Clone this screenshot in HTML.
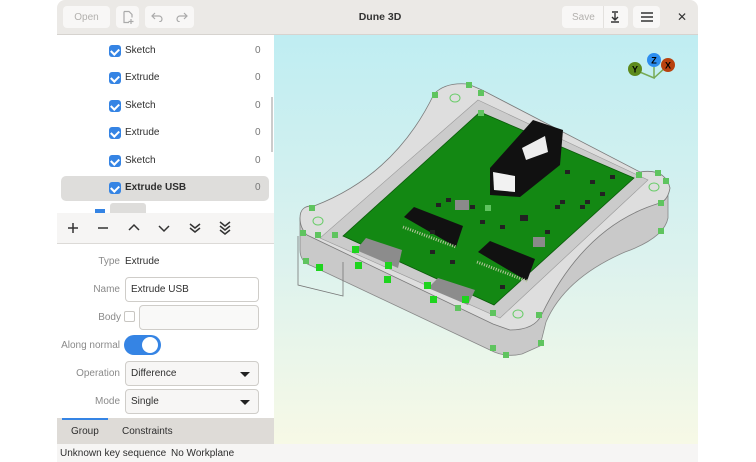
<!DOCTYPE html>
<html><head><meta charset="utf-8"><style>
*{box-sizing:border-box;margin:0;padding:0}
body{width:756px;height:462px;background:#fff;position:relative;overflow:hidden;font-family:"Liberation Sans","DejaVu Sans",sans-serif;font-size:10px;color:#2e2e2e}
.a{position:absolute}
.hdr{left:57px;top:0;width:641px;height:35px;background:#ebe9e6;border-bottom:1px solid #d6d3cf;border-radius:8px 8px 0 0}
.btn{position:absolute;background:#f8f7f6;border-radius:4px;color:#b3b1ae;display:flex;align-items:center;justify-content:center;font-size:10px}
.row{position:absolute;left:61px;width:208px;height:25px}
.cb{position:absolute;left:48px;top:7px;width:12px;height:12px;background:#3584e4;border-radius:3px}
.cb:after{content:"";position:absolute;left:3px;top:1.5px;width:4px;height:6px;border:solid #fff;border-width:0 2px 2px 0;transform:rotate(45deg)}
.lbl{position:absolute;left:64px;top:7px;font-size:10px;color:#2e2e2e}
.num{position:absolute;left:194px;top:7px;color:#777}
.pl{position:absolute;width:120px;text-align:right;color:#8a8a8a;left:0}
.ent{position:absolute;left:125px;width:134px;height:25px;border:1px solid #cfcdc9;border-radius:4px;background:#fff;padding:6px 5px;color:#2e2e2e}
.dd{position:absolute;left:125px;width:134px;height:25px;border:1px solid #cfcdc9;border-radius:4px;background:#f7f6f5;padding:6px 5px;color:#2e2e2e}
.dd:after{content:"";position:absolute;right:8px;top:10px;border:5px solid transparent;border-top:5px solid #222;border-bottom:0}
</style></head><body>
<div class="a hdr"></div>
<div class="btn" style="left:63px;top:6px;width:47px;height:22px">Open</div>
<div class="btn" style="left:116px;top:6px;width:23px;height:22px"><svg width="14" height="14" viewBox="0 0 14 14"><path d="M3 1.5h5l3 3v3M3 1.5v11h5" fill="none" stroke="#aaa" stroke-width="1.2"/><path d="M10 9v5M7.5 11.5h5" stroke="#aaa" stroke-width="1.2"/></svg></div>
<div class="btn" style="left:145px;top:6px;width:49px;height:22px;justify-content:space-around"><svg width="12" height="10"><path d="M4 1L1 4l3 3M1 4h7a3 3 0 0 1 0 6" fill="none" stroke="#aaa" stroke-width="1.2"/></svg><svg width="12" height="10"><path d="M8 1l3 3-3 3M11 4H4a3 3 0 0 0 0 6" fill="none" stroke="#aaa" stroke-width="1.2"/></svg></div>
<div class="a" style="left:340px;top:11px;width:80px;text-align:center;font-weight:bold;font-size:10.5px;color:#333">Dune 3D</div>
<div class="btn" style="left:562px;top:6px;width:66px;height:22px;justify-content:flex-start;padding-left:10px">Save<span style="position:absolute;left:41px;top:0;width:1px;height:22px;background:#e3e1de"></span><svg style="position:absolute;left:48px;top:5px" width="10" height="12"><path d="M2 1h6M5 2v7M2 6l3 3 3-3M1 11h8" fill="none" stroke="#333" stroke-width="1.4"/></svg></div>
<div class="btn" style="left:633px;top:6px;width:27px;height:22px"><svg width="12" height="10"><path d="M0 1h12M0 5h12M0 9h12" stroke="#333" stroke-width="1.6"/></svg></div>
<div class="a" style="left:677px;top:10px;font-size:12px;font-weight:bold;color:#333">✕</div>

<div class="a" style="left:57px;top:35px;width:217px;height:409px;background:#fff"></div>
<div class="a" style="left:61px;top:176px;width:208px;height:25px;background:#dedddb;border-radius:5px"></div>
<div class="row" style="top:38px"><div class="cb"></div><div class="lbl">Sketch</div><div class="num">0</div></div>
<div class="row" style="top:65px"><div class="cb"></div><div class="lbl">Extrude</div><div class="num">0</div></div>
<div class="row" style="top:93px"><div class="cb"></div><div class="lbl">Sketch</div><div class="num">0</div></div>
<div class="row" style="top:120px"><div class="cb"></div><div class="lbl">Extrude</div><div class="num">0</div></div>
<div class="row" style="top:148px"><div class="cb"></div><div class="lbl">Sketch</div><div class="num">0</div></div>
<div class="row" style="top:175px"><div class="cb"></div><div class="lbl" style="font-weight:bold">Extrude USB</div><div class="num">0</div></div>
<div class="a" style="left:271px;top:97px;width:2px;height:55px;background:#ccc"></div>
<div class="a" style="left:95px;top:209px;width:10px;height:4px;background:#3584e4"></div>
<div class="a" style="left:110px;top:203px;width:36px;height:10px;background:#dedddb;border-radius:3px 3px 0 0"></div>
<div class="a" style="left:57px;top:213px;width:217px;height:31px;background:#f6f5f4;border-bottom:1px solid #dcdad7"></div>
<svg class="a" style="left:60px;top:220px" width="180" height="16"><g fill="none" stroke="#333" stroke-width="1.5"><path d="M13 3v10M8 8h10"/><path d="M38 8h10"/><path d="M69 10l5-5 5 5"/><path d="M99 6l5 5 5-5"/><path d="M130 4l5 4 5-4M130 8l5 4 5-4"/><path d="M160 2l5 4 5-4M160 6l5 4 5-4M160 10l5 4 5-4"/></g></svg>

<div class="pl" style="top:256px">Type</div><div class="a" style="left:125px;top:256px">Extrude</div>
<div class="pl" style="top:284px">Name</div><div class="ent" style="top:277px">Extrude USB</div>
<div class="pl" style="top:312px;width:121px">Body</div>
<div class="a" style="left:124px;top:311px;width:11px;height:11px;border:1px solid #c8c6c2;border-radius:2px;background:#fff"></div>
<div class="ent" style="left:139px;width:120px;top:305px;background:#f9f9f8"></div>
<div class="pl" style="top:340px">Along normal</div>
<div class="a" style="left:124px;top:335px;width:37px;height:20px;background:#3584e4;border-radius:10px"><div class="a" style="left:18px;top:2px;width:16px;height:16px;border-radius:8px;background:#fff"></div></div>
<div class="pl" style="top:368px">Operation</div><div class="dd" style="top:361px">Difference</div>
<div class="pl" style="top:396px">Mode</div><div class="dd" style="top:389px">Single</div>

<div class="a" style="left:57px;top:418px;width:217px;height:26px;background:#dedbd7"></div>
<div class="a" style="left:62px;top:418px;width:46px;height:2px;background:#3584e4"></div>
<div class="a" style="left:71px;top:426px">Group</div>
<div class="a" style="left:122px;top:426px">Constraints</div>
<div class="a" style="left:57px;top:444px;width:641px;height:18px;background:#f6f5f4"></div>
<div class="a" style="left:60px;top:448px">Unknown key sequence</div>
<div class="a" style="left:171px;top:448px">No Workplane</div>

<div class="a" style="left:274px;top:35px;width:424px;height:409px;background:linear-gradient(#bfedf2,#dcf2ee 55%,#f7f9e6)"></div>
<svg class="a" style="left:274px;top:35px" width="424" height="409" viewBox="274 35 424 409">
<path d="M300 218 L300 250 Q300 262 312 266 L490 350 Q505 358 522 354 L540 346 L546 322 Q565 278 625 252 Q664 238 668 218 L668 185 Z" fill="#c9c9c9" stroke="#888" stroke-width="0.8"/>
<path d="M300 218 Q300 205 314 206 Q395 175 434 94 Q445 82 468 84 L482 90 L640 172 Q665 168 670 188 Q668 200 660 203 Q585 225 542 314 Q535 330 510 330 L493 324 L307 235 Q300 228 300 218 Z" fill="#dedede" stroke="#7a7a7a" stroke-width="0.8"/>
<path d="M478 100 L648 180 L500 318 L320 238 Z" fill="#cbcbcb" stroke="#999" stroke-width="0.6"/>
<path d="M480 112 L634 178 L494 305 L343 236 Z" fill="#138813" stroke="#0a5a0a" stroke-width="0.8"/>
<path d="M490 168 L490 195 L520 197 L560 165 L563 130 L533 120 Z" fill="#111"/>
<path d="M493 172 L515 176 L515 192 L494 190 Z" fill="#f2f2f2"/>
<path d="M522 148 L545 136 L548 152 L526 160 Z" fill="#eee"/>
<path d="M404 217 L414 207 L463 226 L456 247 Z" fill="#111"/>
<path d="M478 252 L490 241 L535 259 L527 281 Z" fill="#111"/>
<path d="M403 227 L456 247" stroke="#b9c7a0" stroke-width="3" stroke-dasharray="1 1.5"/>
<path d="M477 262 L527 281" stroke="#b9c7a0" stroke-width="3" stroke-dasharray="1 1.5"/>
<path d="M356 250 L366 238 L402 250 L398 268 Z" fill="#8c8c8c"/>
<path d="M428 288 L438 278 L475 290 L468 305 Z" fill="#8c8c8c"/>
<g fill="#222">
<rect x="436" y="203" width="5" height="4"/><rect x="446" y="198" width="5" height="4"/><rect x="470" y="205" width="5" height="4"/><rect x="560" y="200" width="5" height="4"/><rect x="580" y="205" width="5" height="4"/><rect x="590" y="180" width="5" height="4"/><rect x="610" y="175" width="5" height="4"/><rect x="565" y="170" width="5" height="4"/><rect x="500" y="225" width="5" height="4"/><rect x="480" y="220" width="5" height="4"/><rect x="545" y="230" width="5" height="4"/><rect x="520" y="215" width="8" height="6"/><rect x="450" y="260" width="5" height="4"/><rect x="430" y="250" width="5" height="4"/><rect x="500" y="285" width="5" height="4"/><rect x="555" y="205" width="5" height="4"/><rect x="585" y="200" width="5" height="4"/><rect x="600" y="192" width="5" height="4"/><rect x="430" y="230" width="5" height="4"/>
</g>
<rect x="455" y="200" width="14" height="10" fill="#8a8a8a"/>
<rect x="533" y="237" width="12" height="10" fill="#8a8a8a"/>
<path d="M298 236 L298 285 L343 296 L343 262" fill="none" stroke="#777" stroke-width="0.8"/>
<g fill="#5fc45f">
<rect x="432" y="92" width="6" height="6"/><rect x="466" y="82" width="6" height="6"/><rect x="478" y="90" width="6" height="6"/><rect x="478" y="110" width="6" height="6"/><rect x="636" y="172" width="6" height="6"/><rect x="655" y="170" width="6" height="6"/><rect x="663" y="178" width="6" height="6"/><rect x="658" y="200" width="6" height="6"/><rect x="658" y="228" width="6" height="6"/><rect x="309" y="205" width="6" height="6"/><rect x="300" y="230" width="6" height="6"/><rect x="315" y="232" width="6" height="6"/><rect x="332" y="232" width="6" height="6"/><rect x="303" y="258" width="6" height="6"/><rect x="490" y="345" width="6" height="6"/><rect x="503" y="352" width="6" height="6"/><rect x="536" y="312" width="6" height="6"/><rect x="538" y="340" width="6" height="6"/><rect x="485" y="205" width="6" height="6"/><rect x="490" y="310" width="6" height="6"/><rect x="455" y="305" width="6" height="6"/>
</g>
<g fill="#1ed41e">
<rect x="316" y="264" width="7" height="7"/><rect x="352" y="246" width="7" height="7"/><rect x="355" y="262" width="7" height="7"/><rect x="385" y="262" width="7" height="7"/><rect x="384" y="276" width="7" height="7"/><rect x="424" y="282" width="7" height="7"/><rect x="430" y="296" width="7" height="7"/><rect x="462" y="296" width="7" height="7"/>
</g>
<g fill="none" stroke="#6c6" stroke-width="1"><ellipse cx="455" cy="98" rx="5" ry="4"/><ellipse cx="654" cy="187" rx="5" ry="4"/><ellipse cx="318" cy="221" rx="5" ry="4"/><ellipse cx="518" cy="314" rx="5" ry="4"/></g>
<path d="M654 67 L654 78 L635 70 M654 78 L667 66" stroke="#7a5" stroke-width="1.5" fill="none"/>
<circle cx="635" cy="69" r="7" fill="#5d8a1c"/><text x="635" y="72.5" font-size="9" font-weight="bold" text-anchor="middle" font-family="Liberation Sans">Y</text>
<circle cx="668" cy="65" r="7" fill="#b8420f"/><text x="668" y="68.5" font-size="9" font-weight="bold" text-anchor="middle" font-family="Liberation Sans">X</text>
<circle cx="654" cy="60" r="7" fill="#2d8ef0"/><text x="654" y="63.5" font-size="9" font-weight="bold" text-anchor="middle" font-family="Liberation Sans">Z</text>
</svg>
</body></html>
